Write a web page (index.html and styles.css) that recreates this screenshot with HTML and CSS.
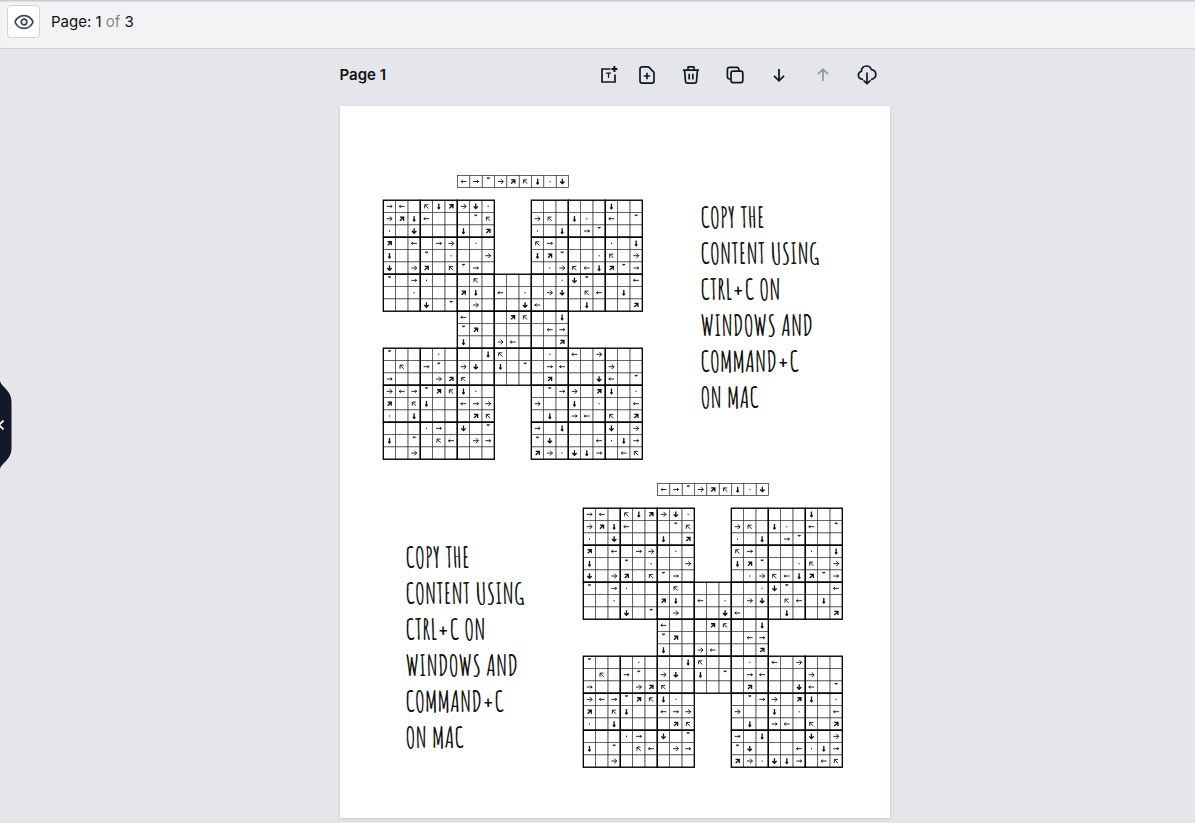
FILE: index.html
```html
<!DOCTYPE html>
<html lang="en">
<head>
    <meta charset="utf-8">
    <title>Page Editor</title>
    <link rel="stylesheet" href="styles.css">
</head>
<body>
    <header class="topbar">
        <button class="preview-btn" aria-label="Preview">
            <svg width="20" height="20" viewBox="0 0 20 20" fill="none" stroke="#374151" stroke-width="1.7">
                <path d="M1 10C2.6 6.2 6 3.6 10 3.6S17.4 6.2 19 10C17.4 13.8 14 16.4 10 16.4S2.6 13.8 1 10Z"/>
                <circle cx="10" cy="10" r="2.8"/>
            </svg>
        </button>
        <div class="page-count">Page: 1 <span class="muted">of</span> 3</div>
    </header>

    <button class="drawer-toggle" aria-label="Open side panel">
        <svg width="12" height="88" viewBox="0 0 12 88">
            <path d="M0 0C2 7 11.5 9 11.5 21V67C11.5 79 2 81 0 88Z" fill="#111827"/>
            <path d="M3.5 39.5L-1 44L3.5 48.5" fill="none" stroke="#fff" stroke-width="1.8"/>
        </svg>
    </button>

    <main class="workspace">
        <div class="page-header">
            <h2>Page 1</h2>
            <div class="page-actions">
                <button class="tight" aria-label="Add title">
                    <svg width="20" height="20" viewBox="0 0 20 20" fill="none" stroke="#111827" stroke-width="1.7">
                        <path d="M11.5 4H3V17H16V9.5"/>
                        <path d="M15.4 1V7M12.4 4H18.4" stroke-width="2"/>
                        <path d="M7 8.2H12M9.5 8.2V13" stroke-width="1.2"/>
                    </svg>
                </button>
                <button aria-label="Add page">
                    <svg width="20" height="20" viewBox="0 0 20 20" fill="none" stroke="#111827" stroke-width="1.7" stroke-linejoin="round">
                        <path d="M5 1.8H11.5L17 7.3V16Q17 18.2 14.8 18.2H5.2Q3 18.2 3 16V4Q3 1.8 5.2 1.8Z"/>
                        <path d="M10 7.8V14.2M6.8 11H13.2"/>
                    </svg>
                </button>
                <button aria-label="Delete page">
                    <svg width="20" height="20" viewBox="0 0 20 20" fill="none" stroke="#111827" stroke-width="1.7" stroke-linejoin="round">
                        <path d="M2 5.2H18M7 5V2.4Q7 1.8 7.6 1.8H12.4Q13 1.8 13 2.4V5"/>
                        <path d="M3.6 5.4L4.5 16.4Q4.7 18.2 6.4 18.2H13.6Q15.3 18.2 15.5 16.4L16.4 5.4"/>
                        <path d="M8.2 8.8V14.6M11.8 8.8V14.6"/>
                    </svg>
                </button>
                <button aria-label="Duplicate page">
                    <svg width="20" height="20" viewBox="0 0 20 20" fill="none" stroke="#111827" stroke-width="1.7">
                        <rect x="6" y="6.2" width="11.8" height="11.4" rx="2"/>
                        <path d="M6 14H4.6Q2.4 14 2.4 11.8V4.6Q2.4 2.4 4.6 2.4H11.6Q13.8 2.4 13.8 4.6V6"/>
                    </svg>
                </button>
                <button aria-label="Move down">
                    <svg width="20" height="20" viewBox="0 0 20 20" fill="none" stroke="#111827" stroke-width="1.8">
                        <path d="M10 4V15.6M5 10.8L10 15.8L15 10.8"/>
                    </svg>
                </button>
                <button aria-label="Move up" disabled>
                    <svg width="20" height="20" viewBox="0 0 20 20" fill="none" stroke="#8c9aa8" stroke-width="1.7">
                        <path d="M10 16V4.4M5 9.2L10 4.2L15 9.2"/>
                    </svg>
                </button>
                <button aria-label="Download page">
                    <svg width="20" height="20" viewBox="0 0 20 20" fill="none" stroke="#111827" stroke-width="1.7" stroke-linecap="round">
                        <path d="M5.4 14.4C2.8 13.8 1.4 12.2 1.4 10.2C1.4 8.2 2.6 6.8 4.4 6.2C4.4 3 6.6 1 9.4 1C12 1 13.8 2.4 14.4 4.6C17 5 18.8 7 18.8 9.6C18.8 12 17 13.8 14.6 14.4"/>
                        <path d="M10 8V18.4M7 15.8L10 18.6L13 15.8"/>
                    </svg>
                </button>
            </div>
        </div>

        <div class="page">
            <div class="page-row">
                <svg class="puzzle" viewBox="0 0 262 286" role="img" aria-label="Arrow sudoku"></svg>
                <p class="note">COPY THE<br>CONTENT USING<br>CTRL+C ON<br>WINDOWS AND<br>COMMAND+C<br>ON MAC</p>
            </div>
            <div class="page-row reverse">
                <svg class="puzzle" viewBox="0 0 262 286" role="img" aria-label="Arrow sudoku"></svg>
                <p class="note">COPY THE<br>CONTENT USING<br>CTRL+C ON<br>WINDOWS AND<br>COMMAND+C<br>ON MAC</p>
            </div>
        </div>
    </main>

    <script src="puzzle.js"></script>
</body>
</html>
```
FILE: styles.css
```css
body {
    margin: 0;
    min-height: 100vh;
    font-family: Inter, "Liberation Sans", sans-serif;
    background: #e5e6ea;
    color: #111;
    overflow: hidden;
}
button {
    border: none;
    background: none;
    padding: 0;
    cursor: pointer;
}
svg {
    display: block;
}
.topbar {
    display: flex;
    align-items: center;
    gap: 11px;
    box-sizing: border-box;
    height: 49px;
    padding: 0 7px 6px;
    background: #f2f3f5;
    border-top: 1px solid #c9cad0;
    border-bottom: 1px solid #d3d4d9;
    box-shadow: inset 0 1px 1px #dcdde1;
}
.preview-btn {
    display: flex;
    align-items: center;
    justify-content: center;
    box-sizing: border-box;
    width: 33px;
    height: 33px;
    background: #fff;
    border: 1px solid #d1d5db;
    border-radius: 4px;
}
.page-count {
    font-size: 15px;
}
.muted {
    color: #8b8b8f;
}
.drawer-toggle {
    position: absolute;
    left: 0;
    top: 381px;
}
.workspace {
    width: 550px;
    margin: 0 auto;
    padding-left: 34px;
}
.page-header {
    display: flex;
    align-items: center;
    justify-content: space-between;
    height: 52px;
    margin-bottom: 5px;
}
.page-header h2 {
    margin: 0;
    padding-bottom: 2px;
    font-size: 15px;
    font-weight: 600;
}
.page-actions {
    display: flex;
    gap: 24px;
    padding-right: 13px;
}
.page-actions .tight {
    margin-right: -6px;
}
.page {
    box-sizing: border-box;
    aspect-ratio: 550 / 712;
    padding: 69px 46px 0 42px;
    background: #fff;
    box-shadow: 0 1px 3px rgba(0,0,0,0.15);
}
.page-row {
    display: flex;
    gap: 57px;
    margin-bottom: 22px;
}
.page-row.reverse {
    flex-direction: row-reverse;
    gap: 54px;
}
.puzzle {
    width: 262px;
    height: 286px;
    flex: none;
}
.note {
    flex: none;
    width: 122px;
    margin: 25px 0 0;
    font-family: "Amatic SC", "Liberation Sans Narrow", "Liberation Sans", sans-serif;
    font-size: 28px;
    font-weight: 700;
    line-height: 36px;
    white-space: nowrap;
}
.page-row.reverse .note {
    margin-top: 57px;
}
.thin {
    fill: none;
    stroke: #333;
    stroke-width: 0.5;
}
.thick {
    fill: none;
    stroke: #000;
    stroke-width: 1.3;
}
.mark {
    fill: none;
    stroke: #111;
    stroke-width: 0.9;
}
.mark.bold {
    stroke-width: 1.3;
}
```
FILE: puzzle.js
```js
// space = outside the puzzle, . = empty cell
const rows = [
    'rl.kdnRDo   ......d..',
    'Rndl...vk   Rk.do.l.v',
    'o.D...d.n   o.d.rv...',
    'n.l.rR.o.   kr....o.d',
    'd..v.o..R   dnv..ok.R',
    'D.Rn.kvr.   .oRkldnvr',
    'v.ro...k......oDv...l',
    '..o...nd.l.o.RD.kl.d.',
    '...D.v.R...Dl...d...n',
    '      l...nk..d      ',
    '      vn.....lr      ',
    '      d..Rl...n      ',
    'v...o...dk...o.l.R...',
    '.k.rv.RD.d.v.rl...R..',
    'r...Rnk......n...Dl.v',
    'Rlrvnkdo.   .vrR.nd.o',
    'n.kd..lrR   R..d.o..l',
    'o.d....nk   .d.rl.k.n',
    '...or.D.v   r.d...D.R',
    'd.v.kl.Rr   vD...lodr',
    '..R......   nRoDdr.lk'
];
const key = 'lrvRnkdoD';

const shapes = {
    l: 'M2.8 0H-2.8M-1 -1.3L-2.6 0L-1 1.3',
    r: 'M-2.8 0H2.8M1 -1.3L2.6 0L1 1.3',
    v: 'M-1.3 -3.6H1.3L0 -2.8Z',
    R: 'M-2.8 0H2.6M0.2 -2.4L2.6 0L0.2 2.4',
    n: 'M-1.8 2L1.6 -1.4M-1.8 -1.6H1.8V2',
    k: 'M2 2.2L-1.6 -1.4M-1.8 2V-1.6H1.8',
    d: 'M0 -2.8V2.6M-1.2 1L0 2.4L1.2 1',
    o: 'M0 -0.7V0.7',
    D: 'M0 -2.8V2.6M-2.2 0L0 2.2L2.2 0'
};
const cell = 37 / 3;

function mark(type, x, y) {
    const bold = 'ndD'.includes(type) ? ' bold' : '';
    return `<path class="mark${bold}" transform="translate(${x} ${y})" d="${shapes[type]}"/>`;
}

function drawPuzzle() {
    let out = '';
    [...key].forEach((type, i) => {
        const x = 75.5 + i * cell;
        out += `<rect class="thin" x="${x}" y="0.5" width="${cell}" height="12"/>`;
        out += mark(type, x + cell / 2, 6.5);
    });
    out += '<rect class="thin" x="75.5" y="0.5" width="111" height="12"/>';
    let boxes = '';
    rows.forEach((row, r) => {
        [...row].forEach((type, c) => {
            if (type === ' ') return;
            const x = 1.3 + c * cell;
            const y = 25.2 + r * cell;
            out += `<rect class="thin" x="${x}" y="${y}" width="${cell}" height="${cell}"/>`;
            if (r % 3 === 0 && c % 3 === 0) {
                boxes += `<rect class="thick" x="${x}" y="${y}" width="37" height="37"/>`;
            }
            if (type !== '.') out += mark(type, x + cell / 2, y + cell / 2);
        });
    });
    return out + boxes;
}

document.querySelectorAll('.puzzle').forEach(svg => {
    svg.innerHTML = drawPuzzle();
});
```
